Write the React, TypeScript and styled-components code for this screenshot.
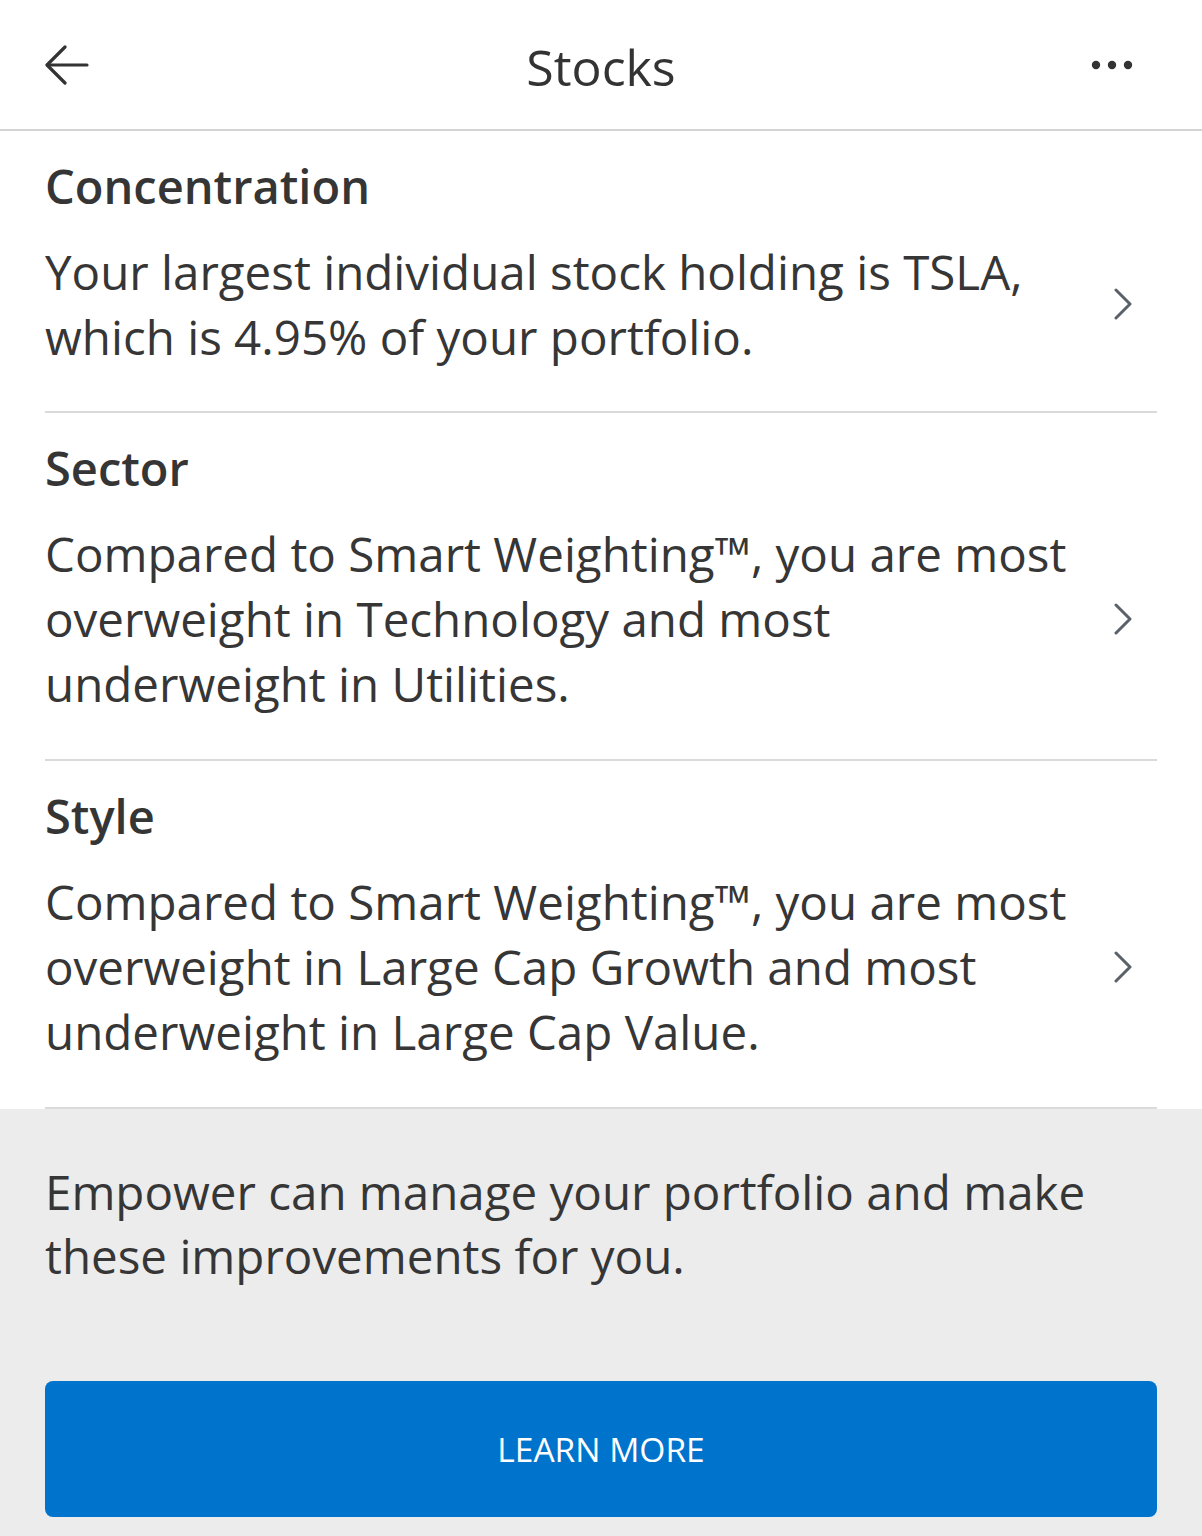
import React from 'react';
import styled, {createGlobalStyle} from 'styled-components';

const GlobalStyle = createGlobalStyle`
  html, body {
    margin: 0;
    padding: 0;
    background: #ececec;
  }
  body {
    font-family: "Open Sans", "Noto Sans", sans-serif;
    color: #363636;
  }
`;

const Page = styled.div`
  width: 1202px;
  min-height: 1536px;
  display: flex;
  flex-flow: column;
  background: #ececec;
`;

const Header = styled.header`
  height: 129px;
  display: grid;
  grid-template-columns: 120px 1fr 120px;
  align-items: center;
  padding: 0 45px;
  background: #ffffff;
  border-bottom: 2px solid #d4d4d4;
`;

const HeaderTitle = styled.h1`
  margin: 0;
  text-align: center;
  font-size: 50px;
  font-weight: 400;
  color: #333333;
  line-height: 1;
  padding-top: 4px;
`;

const IconButton = styled.button<{align: 'start' | 'end'}>`
  border: 0;
  background: none;
  padding: 0 ${p => (p.align === 'end' ? '24px' : '0')} 0 0;
  display: flex;
  justify-content: ${p => (p.align === 'start' ? 'flex-start' : 'flex-end')};
  align-items: center;
  color: #333333;
  cursor: pointer;
`;

const List = styled.section`
  background: #ffffff;
  padding: 0 45px;
`;

const Item = styled.div`
  display: flex;
  align-items: flex-end;
  padding: 24px 0 42px;
  border-bottom: 2px solid #dadada;

  & + & {
    padding-bottom: 43px;
  }
`;

const ItemText = styled.div`
  flex: 1 1 auto;
  min-width: 0;
`;

const ItemTitle = styled.h2`
  margin: 0 0 22px;
  font-size: 47px;
  line-height: 62px;
  font-weight: 600;
  color: #353535;
`;

const ItemBody = styled.p`
  margin: 0;
  font-size: 47.5px;
  line-height: 65px;
  font-weight: 400;
  color: #363636;
`;

const ChevronWrap = styled.div<{lines: number}>`
  flex: 0 0 60px;
  display: flex;
  justify-content: flex-end;
  align-items: center;
  padding-right: 25px;
  height: ${p => p.lines * 65}px;
  color: #5b6169;
`;

const Promo = styled.section`
  padding: 51px 45px 21px;
  display: flex;
  flex-flow: column;
  gap: 93px;
`;

const PromoText = styled.p`
  margin: 0;
  font-size: 47.5px;
  line-height: 64px;
  color: #363636;
`;

const LearnMore = styled.button`
  height: 136px;
  border: 0;
  border-radius: 8px;
  background: #0074cc;
  color: #ffffff;
  font-family: "Open Sans", "Noto Sans", sans-serif;
  font-size: 33.5px;
  cursor: pointer;
`;

const BackArrow = () => (
  <svg width="44" height="42" viewBox="0 0 44 42" fill="none" stroke="currentColor" strokeWidth="3.2" strokeLinecap="round" strokeLinejoin="round">
    <path d="M42 21H3"/>
    <path d="M20 3L2 21l18 18"/>
  </svg>
);

const Dots = () => (
  <svg width="42" height="10" viewBox="0 0 42 10" fill="#333333">
    <circle cx="5" cy="5" r="4.2"/>
    <circle cx="21" cy="5" r="4.2"/>
    <circle cx="37" cy="5" r="4.2"/>
  </svg>
);

const Chevron = () => (
  <svg width="18" height="32" viewBox="0 0 18 32" fill="none" stroke="currentColor" strokeWidth="3" strokeLinecap="round" strokeLinejoin="round">
    <path d="M2 2l14 14L2 30"/>
  </svg>
);

const items = [
  {
    title: 'Concentration',
    lines: ['Your largest individual stock holding is TSLA,', 'which is 4.95% of your portfolio.'],
  },
  {
    title: 'Sector',
    lines: [
      'Compared to Smart Weighting™, you are most',
      'overweight in Technology and most',
      'underweight in Utilities.',
    ],
  },
  {
    title: 'Style',
    lines: [
      'Compared to Smart Weighting™, you are most',
      'overweight in Large Cap Growth and most',
      'underweight in Large Cap Value.',
    ],
  },
];

const App = () => (
  <>
    <GlobalStyle />
    <Page>
      <Header>
        <IconButton align="start" aria-label="Back"><BackArrow /></IconButton>
        <HeaderTitle>Stocks</HeaderTitle>
        <IconButton align="end" aria-label="More"><Dots /></IconButton>
      </Header>
      <List>
        {items.map(item => (
          <Item key={item.title}>
            <ItemText>
              <ItemTitle>{item.title}</ItemTitle>
              <ItemBody>
                {item.lines.map((line, i) => (
                  <React.Fragment key={i}>{line}{i < item.lines.length - 1 && <br />}</React.Fragment>
                ))}
              </ItemBody>
            </ItemText>
            <ChevronWrap lines={item.lines.length}><Chevron /></ChevronWrap>
          </Item>
        ))}
      </List>
      <Promo>
        <PromoText>Empower can manage your portfolio and make<br />these improvements for you.</PromoText>
        <LearnMore>LEARN MORE</LearnMore>
      </Promo>
    </Page>
  </>
);

export default App;
